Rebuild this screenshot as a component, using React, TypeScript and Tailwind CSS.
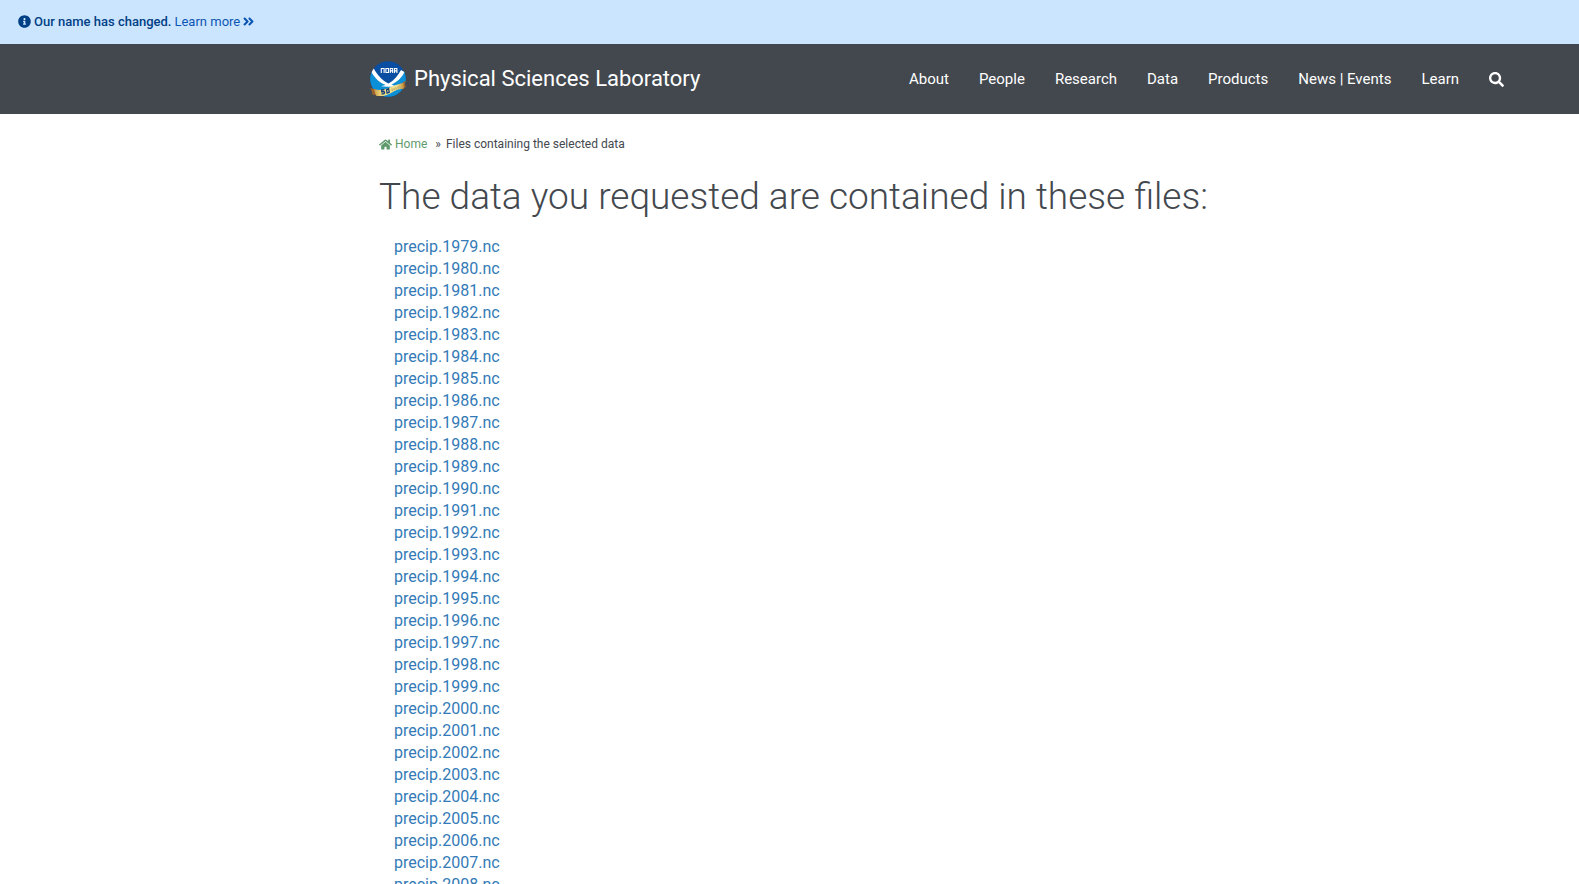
import { FaAngleDoubleRight, FaHome, FaInfoCircle, FaSearch } from "react-icons/fa";

const navItems = ["About", "People", "Research", "Data", "Products", "News | Events", "Learn"];

const years = Array.from({ length: 30 }, (_, i) => 1979 + i);

function Logo() {
  return (
    <svg viewBox="0 0 36 36" className="size-9 shrink-0" aria-hidden="true">
      <defs>
        <clipPath id="disc">
          <circle cx="18" cy="18" r="17.8" />
        </clipPath>
        <linearGradient id="ribbon" x1="0" x2="1">
          <stop offset="0" stopColor="#c99a48" />
          <stop offset="0.25" stopColor="#f3dc80" />
          <stop offset="0.75" stopColor="#f5e394" />
          <stop offset="1" stopColor="#c08c3c" />
        </linearGradient>
      </defs>
      <g clipPath="url(#disc)">
        <rect width="36" height="36" fill="#0a4ea2" />
        <path d="M0 9 Q6 20 17 25 Q28 20 36 9 V36 H0Z" fill="#0b8fd6" />
        <path
          d="M0.5 9 L3.5 7 C7 13.5 12 19.5 18.5 22.5 C24 19.5 28 14.5 31 9 L34.5 11 C32 16.5 27 21 21.5 23.5 L25.5 25.2 Q18 26.3 11 25.3 L15.5 24 C8 21 3.5 15.5 0.5 9Z"
          fill="#fff"
        />
      </g>
      <g fill="none" stroke="#fff" strokeWidth="1.1">
        <path d="M11.3 12V7.5H14.1V12" />
        <path d="M15.9 7.5H18.5V11.5H15.9Z" />
        <path d="M20.3 12V7.5H22.7V12M20.3 9.9H22.7" />
        <path d="M24.5 12V7.5H26.9V12M24.5 9.9H26.9" />
      </g>
      <path d="M0.3 27 L6 28.5 L7 34 L2.2 33.5 L2 30.5Z M31 23 L35.8 19.5 L35 22.5 L35.8 26 L32 28.5Z" fill="#9b642c" />
      <path d="M4 28.3 Q12 30 19 26.8 T33.5 21.8 L34 27.6 Q27 28 21 32 T6 34.8Z" fill="url(#ribbon)" />
      <g fill="none" stroke="#123f7a" strokeWidth="1.3">
        <path d="M14.4 28.6L11.7 28.9V30.7L13.6 30.5Q14.7 30.7 14.5 31.8T11.5 33" />
        <path d="M16.5 28.3L18.6 27.6L19.2 31.3L17.1 32.1Z" />
      </g>
      <path d="M21.5 29.2L31.5 25.2" stroke="#bfb06c" strokeWidth="2.4" strokeDasharray="1.4 0.7" />
    </svg>
  );
}

export default function App() {
  return (
    <div className="min-h-screen bg-white font-[Roboto,sans-serif] text-[#43484e]">
      <div className="flex h-11 items-center gap-[3px] bg-[#cce5ff] px-[18px] pb-px text-[13px] text-[#004085]">
        <FaInfoCircle className="size-[13px]" aria-hidden="true" />
        <strong className="font-medium">Our name has changed.</strong>
        <a href="#name" className="flex items-center gap-[2px] text-[#0b56b3]">
          Learn more
          <FaAngleDoubleRight className="size-[13px]" aria-hidden="true" />
        </a>
      </div>

      <header className="flex h-[70px] items-center justify-between bg-[#43484e] pr-[75px] pl-[370px] text-white">
        <a href="#top" className="flex items-center gap-2 text-[22px] leading-8">
          <Logo />
          Physical Sciences Laboratory
        </a>
        <nav className="flex items-center gap-[30px] text-[15px]">
          {navItems.map((item) => (
            <a key={item} href={`#${item.toLowerCase()}`}>
              {item}
            </a>
          ))}
          <button type="button" aria-label="Search">
            <FaSearch className="size-[15px]" />
          </button>
        </nav>
      </header>

      <main className="pr-4 pl-[379px]">
        <nav aria-label="Breadcrumb" className="flex items-center gap-[5px] pt-5 text-[12px] leading-5">
          <a href="#home" className="mr-[3px] flex items-center gap-[3px] text-[#5f9a6c]">
            <FaHome className="size-[13px]" aria-hidden="true" />
            Home
          </a>
          <span>»</span>
          <span>Files containing the selected data</span>
        </nav>
        <h1 className="mt-[19px] text-[37px] leading-12 font-light">
          The data you requested are contained in these files:
        </h1>
        <ul className="mt-[15px] pl-[15px] text-base leading-[22px]">
          {years.map((year) => (
            <li key={year}>
              <a href={`#precip.${year}.nc`} className="text-[#337ab7]">
                precip.{year}.nc
              </a>
            </li>
          ))}
        </ul>
      </main>
    </div>
  );
}
